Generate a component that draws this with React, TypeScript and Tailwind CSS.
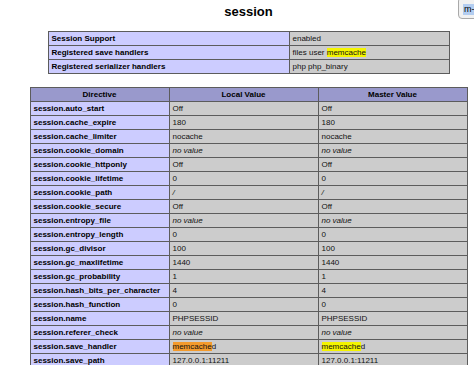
import { type ReactNode } from 'react';

type Row = { name: string; local: ReactNode; master: ReactNode };

const NoValue = () => <i>no value</i>;

const rows: Row[] = [
  { name: 'session.auto_start', local: 'Off', master: 'Off' },
  { name: 'session.cache_expire', local: '180', master: '180' },
  { name: 'session.cache_limiter', local: 'nocache', master: 'nocache' },
  { name: 'session.cookie_domain', local: <NoValue />, master: <NoValue /> },
  { name: 'session.cookie_httponly', local: 'Off', master: 'Off' },
  { name: 'session.cookie_lifetime', local: '0', master: '0' },
  { name: 'session.cookie_path', local: <i>/</i>, master: <i>/</i> },
  { name: 'session.cookie_secure', local: 'Off', master: 'Off' },
  { name: 'session.entropy_file', local: <NoValue />, master: <NoValue /> },
  { name: 'session.entropy_length', local: '0', master: '0' },
  { name: 'session.gc_divisor', local: '100', master: '100' },
  { name: 'session.gc_maxlifetime', local: '1440', master: '1440' },
  { name: 'session.gc_probability', local: '1', master: '1' },
  { name: 'session.hash_bits_per_character', local: '4', master: '4' },
  { name: 'session.hash_function', local: '0', master: '0' },
  { name: 'session.name', local: 'PHPSESSID', master: 'PHPSESSID' },
  { name: 'session.referer_check', local: <NoValue />, master: <NoValue /> },
  {
    name: 'session.save_handler',
    local: (
      <>
        <span className="bg-[#f39a2c]">memcache</span>d
      </>
    ),
    master: (
      <>
        <span className="bg-[#f4f400]">memcache</span>d
      </>
    ),
  },
  { name: 'session.save_path', local: '127.0.0.1:11211', master: '127.0.0.1:11211' },
];

const cell = 'border border-[#5c5c5c] h-[13px] py-0 px-[3px] leading-[13px] whitespace-nowrap align-middle';
const e = `${cell} bg-[#ccccff] font-bold text-left`;
const v = `${cell} bg-[#cccccc] text-left text-[#111]`;
const h = `${cell} bg-[#9999cc] font-bold text-center`;

export default function App() {
  return (
    <div className="relative w-[474px] h-[365px] overflow-hidden bg-white text-black font-['Liberation_Sans',Arial,sans-serif] text-[8px]">
      {/* partly visible search field at the top right */}
      <div className="absolute left-[458px] top-[-3px] w-[30px] h-[22px] rounded-[4px] border border-[#a9a9a9] bg-[#f1f1f1] flex items-end pb-[3px] pl-[4px]">
        <span className="bg-[#b3cdf0] text-[9px] leading-[11px] px-[1px]">m-</span>
      </div>

      <div className="w-[497px] flex flex-col items-center">
        <h2 className="text-[13px] leading-[15px] font-bold mt-[4px] h-[27px]">session</h2>

        <table className="border-collapse w-[401px] table-fixed">
          <colgroup>
            <col className="w-[241px]" />
            <col className="w-[160px]" />
          </colgroup>
          <tbody>
            <tr>
              <td className={e}>Session Support</td>
              <td className={v}>enabled</td>
            </tr>
            <tr>
              <td className={e}>Registered save handlers</td>
              <td className={v}>
                files user <span className="bg-[#f4f400]">memcache</span>
              </td>
            </tr>
            <tr>
              <td className={e}>Registered serializer handlers</td>
              <td className={v}>php php_binary</td>
            </tr>
          </tbody>
        </table>

        <table className="border-collapse w-[437px] table-fixed mt-[13px]">
          <colgroup>
            <col className="w-[139px]" />
            <col className="w-[149px]" />
            <col className="w-[149px]" />
          </colgroup>
          <thead>
            <tr>
              <th className={h}>Directive</th>
              <th className={h}>Local Value</th>
              <th className={h}>Master Value</th>
            </tr>
          </thead>
          <tbody>
            {rows.map(r => (
              <tr key={r.name}>
                <td className={e}>{r.name}</td>
                <td className={v}>{r.local}</td>
                <td className={v}>{r.master}</td>
              </tr>
            ))}
          </tbody>
        </table>
      </div>
    </div>
  );
}
